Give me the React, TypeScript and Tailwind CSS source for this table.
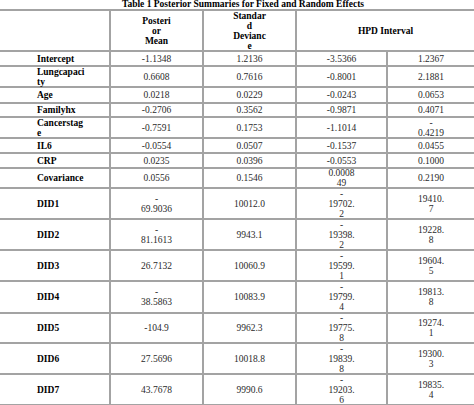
import React from "react";

type Row = { label: string[]; h: string; cells: string[][] };

const rows: Row[] = [
  { label: ["Intercept"], h: "h-[15px]", cells: [["-1.1348"], ["1.2136"], ["-3.5366"], ["1.2367"]] },
  { label: ["Lungcapaci", "ty"], h: "h-[21px]", cells: [["0.6608"], ["0.7616"], ["-0.8001"], ["2.1881"]] },
  { label: ["Age"], h: "h-[16px]", cells: [["0.0218"], ["0.0229"], ["-0.0243"], ["0.0653"]] },
  { label: ["Familyhx"], h: "h-[14px]", cells: [["-0.2706"], ["0.3562"], ["-0.9871"], ["0.4071"]] },
  { label: ["Cancerstag", "e"], h: "h-[21px]", cells: [["-0.7591"], ["0.1753"], ["-1.1014"], ["-", "0.4219"]] },
  { label: ["IL6"], h: "h-[15px]", cells: [["-0.0554"], ["0.0507"], ["-0.1537"], ["0.0455"]] },
  { label: ["CRP"], h: "h-[15px]", cells: [["0.0235"], ["0.0396"], ["-0.0553"], ["0.1000"]] },
  { label: ["Covariance"], h: "h-[20px]", cells: [["0.0556"], ["0.1546"], ["0.0008", "49"], ["0.2190"]] },
  { label: ["DID1"], h: "h-[31px]", cells: [["-", "69.9036"], ["10012.0"], ["-", "19702.", "2"], ["19410.", "7"]] },
  { label: ["DID2"], h: "h-[31px]", cells: [["-", "81.1613"], ["9943.1"], ["-", "19398.", "2"], ["19228.", "8"]] },
  { label: ["DID3"], h: "h-[31px]", cells: [["26.7132"], ["10060.9"], ["-", "19599.", "1"], ["19604.", "5"]] },
  { label: ["DID4"], h: "h-[32px]", cells: [["-", "38.5863"], ["10083.9"], ["-", "19799.", "4"], ["19813.", "8"]] },
  { label: ["DID5"], h: "h-[30px]", cells: [["-104.9"], ["9962.3"], ["-", "19775.", "8"], ["19274.", "1"]] },
  { label: ["DID6"], h: "h-[31px]", cells: [["27.5696"], ["10018.8"], ["-", "19839.", "8"], ["19300.", "3"]] },
  { label: ["DID7"], h: "h-[31px]", cells: [["43.7678"], ["9990.6"], ["-", "19203.", "6"], ["19835.", "4"]] },
];

const widths = ["w-[93px]", "w-[93px]", "w-[91px]", "flex-1"];

function Lines({ lines }: { lines: string[] }) {
  return (
    <div className="flex flex-col items-center whitespace-nowrap">
      {lines.map((l, i) => (
        <span key={i}>{l}</span>
      ))}
    </div>
  );
}

export default function App() {
  return (
    <div
      className="w-[474px] h-[405px] overflow-hidden bg-white text-[#1a1a1a]"
      style={{ fontFamily: '"Liberation Serif", "Times New Roman", serif' }}
    >
      <div className="h-[9px] pl-[12px] flex justify-center items-start text-[9.5px] leading-[9px] font-bold text-black whitespace-nowrap">
        <span>Table 1 Posterior Summaries for Fixed and Random Effects</span>
      </div>
      <div className="border-t-2 border-[#a3a3a3]">
        <div className="h-[41px] flex border-b-2 border-[#a3a3a3] text-[9.5px] leading-[10px] font-bold text-black">
          <div className="w-[109px]" />
          <div className="w-[93px] border-l-2 border-[#a3a3a3] flex items-center justify-center">
            <Lines lines={["Posteri", "or", "Mean"]} />
          </div>
          <div className="w-[93px] border-l-2 border-[#a3a3a3] flex items-center justify-center">
            <Lines lines={["Standar", "d", "Devianc", "e"]} />
          </div>
          <div className="flex-1 border-l-2 border-[#a3a3a3] flex items-center justify-center">
            HPD Interval
          </div>
        </div>
        {rows.map((r, i) => (
          <div key={i} className={`${r.h} flex border-b-2 border-[#a3a3a3] text-[9.5px] leading-[10px]`}>
            <div className="w-[109px] pl-[37px] flex items-center font-bold text-black">
              <div className="flex flex-col whitespace-nowrap">
                {r.label.map((l, j) => (
                  <span key={j}>{l}</span>
                ))}
              </div>
            </div>
            {r.cells.map((c, j) => (
              <div
                key={j}
                className={`${widths[j]} border-l-2 border-[#a3a3a3] flex items-center justify-center text-[#2a2a2a]`}
              >
                <Lines lines={c} />
              </div>
            ))}
          </div>
        ))}
      </div>
    </div>
  );
}
